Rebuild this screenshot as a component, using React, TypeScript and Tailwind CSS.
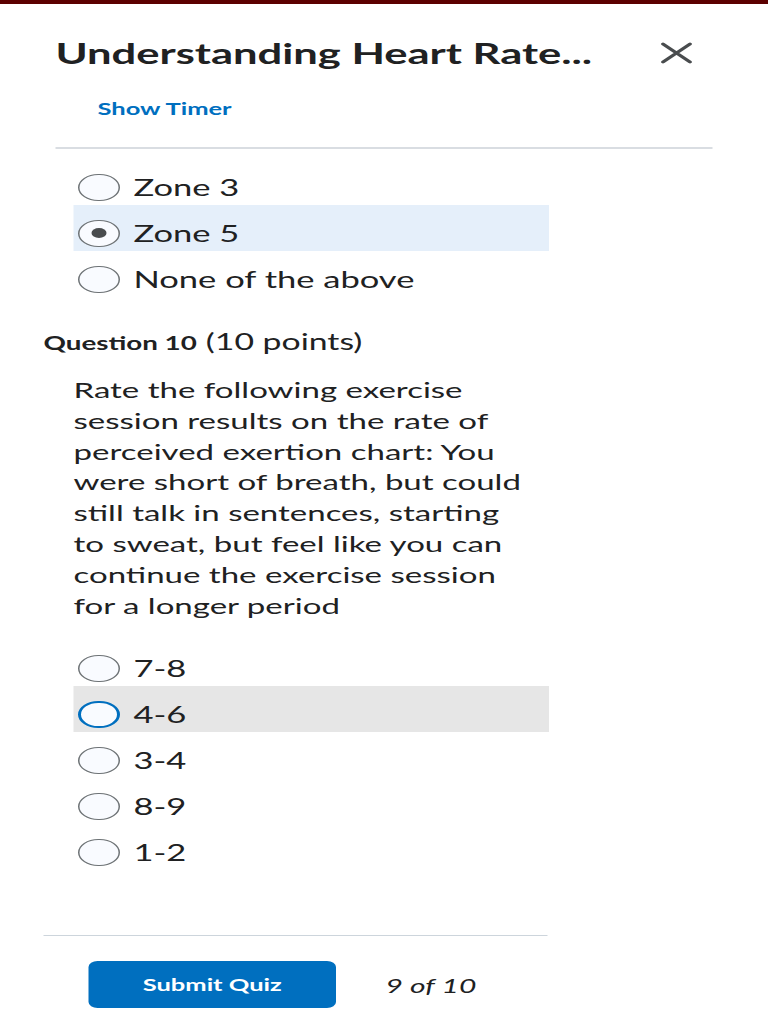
import React from "react";

type RadioState = "off" | "on" | "focus";

function Radio({ state }: { state: RadioState }) {
  if (state === "focus") {
    return <span className="w-[28px] h-[27px] rounded-full border-[2.5px] border-[#006fbf] bg-[#f9fbff] shrink-0" />;
  }
  return (
    <span className="w-[28px] h-[27px] rounded-full border border-[#6e7376] bg-[#f9fbff] shrink-0 flex items-center justify-center">
      {state === "on" && <span className="w-[10px] h-[10px] rounded-full bg-[#494c4e]" />}
    </span>
  );
}

function Option({ label, state, bg }: { label: string; state: RadioState; bg?: string }) {
  return (
    <div className={`flex items-center gap-[9px] h-[46px] pt-[10px] pl-[3px] ${bg ?? ""}`}>
      <Radio state={state} />
      <span className="text-[23px] leading-[26px] text-[#202122]">{label}</span>
    </div>
  );
}

export default function App() {
  return (
    <div className="bg-white min-h-[1024px] overflow-hidden">
      <div className="w-[512px] min-h-[1024px] origin-top-left scale-x-150 font-['Lato',sans-serif] text-[#202122]">
        <div className="h-[4px] bg-[#5c0000]" />
        <div className="flex items-center pt-[31px] pl-[37px]">
          <h1 className="text-[29px] font-bold leading-[36px]">Understanding Heart Rate...</h1>
          <svg width="22" height="22" viewBox="0 0 22 22" className="ml-auto mr-[50px]">
            <path d="M2 2 L20 20 M20 2 L2 20" stroke="#494c4e" strokeWidth="2.6" strokeLinecap="round" />
          </svg>
        </div>
        <div className="pl-[65px] mt-[26px] text-[17px] leading-[24px] font-bold text-[#006fbf]">Show Timer</div>
        <div className="ml-[37px] w-[438px] mt-[26px] h-[2px] bg-[#d9dde2]" />
        <div className="ml-[49px] w-[317px] pt-[10px]">
          <Option label="Zone 3" state="off" />
          <Option label="Zone 5" state="on" bg="bg-[#e5effa]" />
          <Option label="None of the above" state="off" />
        </div>
        <div className="pl-[29px] mt-[30px] flex items-baseline gap-[6px]">
          <span className="text-[18.5px] leading-[30px] font-bold">Question 10</span>
          <span className="text-[22.5px] leading-[30px]">(10 points)</span>
        </div>
        <p className="ml-[49px] w-[304px] mt-[17px] text-[22px] leading-[30.8px]">
          Rate the following exercise session results on the rate of perceived exertion chart: You were short of breath, but could still talk in sentences, starting to sweat, but feel like you can continue the exercise session for a longer period
        </p>
        <div className="ml-[49px] w-[317px] mt-[19px]">
          <Option label="7-8" state="off" />
          <Option label="4-6" state="focus" bg="bg-[#e6e6e6]" />
          <Option label="3-4" state="off" />
          <Option label="8-9" state="off" />
          <Option label="1-2" state="off" />
        </div>
        <div className="ml-[29px] w-[336px] mt-[65px] h-[1px] bg-[#cdd5dc]" />
        <div className="flex items-center pl-[59px] mt-[25px]">
          <button className="w-[165px] h-[47px] rounded-[6px] bg-[#006fbf] text-white text-[17px] font-bold">Submit Quiz</button>
          <span className="ml-[33px] text-[20px] italic text-[#202122]">9 of 10</span>
        </div>
      </div>
    </div>
  );
}
